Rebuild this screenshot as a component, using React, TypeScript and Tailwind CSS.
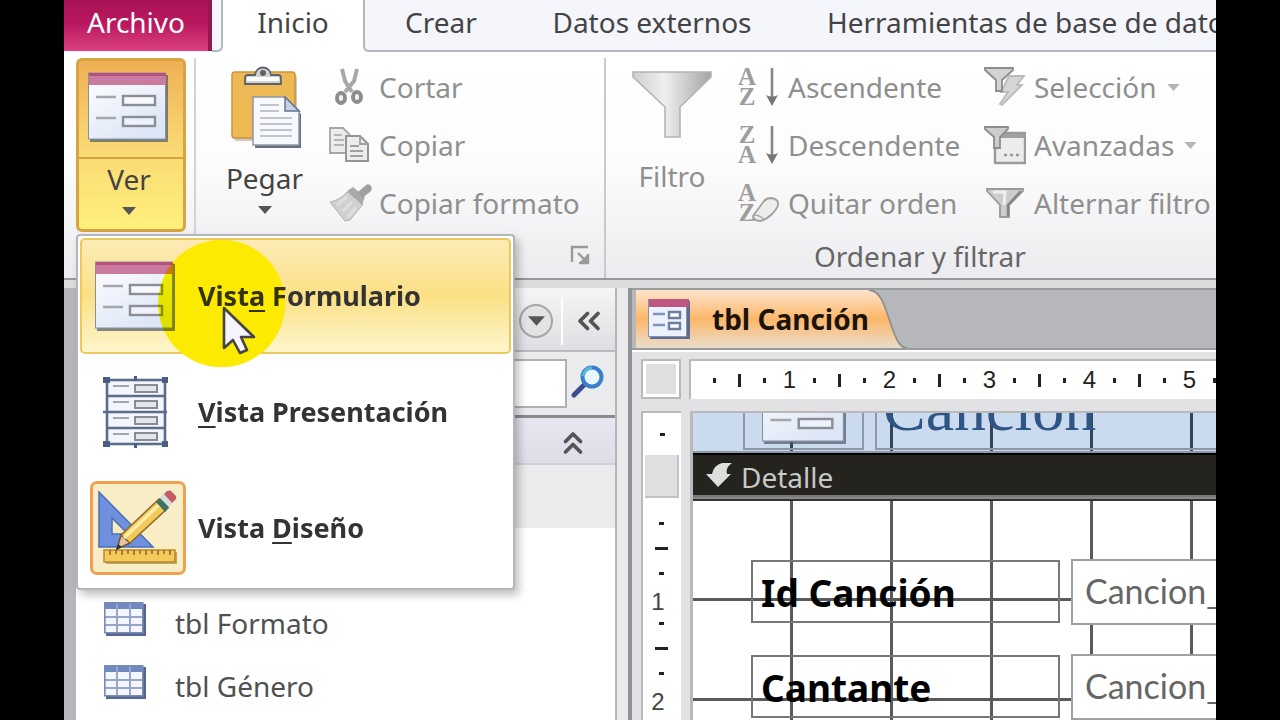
import { useState, type ReactNode } from "react";
import { ChevronsLeft, ChevronsUp } from "lucide-react";

interface IconProps {
  className?: string;
}

function FormIcon({ className }: IconProps) {
  return (
    <svg viewBox="0 0 80 70" preserveAspectRatio="none" className={className} aria-hidden="true">
      <defs>
        <linearGradient id="formBody" x1="0" y1="0" x2="0.6" y2="1">
          <stop offset="0" stopColor="#ffffff" />
          <stop offset="1" stopColor="#dde6f6" />
        </linearGradient>
      </defs>
      <rect x="2" y="3" width="78" height="67" fill="#56606f" opacity="0.75" />
      <rect x="0.5" y="1" width="77" height="66" fill="url(#formBody)" stroke="#8590a5" />
      <rect x="1" y="1" width="77" height="12" fill="#cb7a9f" />
      <rect x="1" y="1" width="77" height="3" fill="#b5517f" />
      <path d="M8 25h20M8 46h20" stroke="#a5a7ad" strokeWidth="2.4" />
      <rect x="35" y="24" width="32" height="9" fill="#f6f8fc" stroke="#8b8e98" strokeWidth="2.4" />
      <rect x="35" y="45" width="32" height="9" fill="#eef2fa" stroke="#8b8e98" strokeWidth="2.4" />
    </svg>
  );
}

function SmallFormIcon({ className }: IconProps) {
  return (
    <svg viewBox="0 0 42 40" className={className} aria-hidden="true">
      <rect x="2" y="2" width="40" height="38" fill="#5f6b8c" />
      <rect x="0.5" y="0.5" width="38" height="37" fill="#edf2fc" stroke="#8293b8" />
      <rect x="1" y="0" width="40" height="8" fill="#bd5782" />
      <path d="M5 15h12M5 26h12" stroke="#8496b5" strokeWidth="2.4" />
      <path d="M21 13h11v6H21zM21 24h11v6H21z" fill="#fff" stroke="#6b7f9f" strokeWidth="2.4" />
    </svg>
  );
}

function LayoutIcon({ className }: IconProps) {
  return (
    <svg viewBox="0 0 66 72" className={className} aria-hidden="true">
      <rect x="5" y="4" width="58" height="64" fill="#f3f6fc" stroke="#5b6d8d" strokeWidth="2.6" />
      <path d="M5 20h58M1 36h64M5 52h58" stroke="#5b6d8d" strokeWidth="2.4" />
      <path d="M11 10h16M11 26h16M11 42h16M11 58h16" stroke="#a3a6ad" strokeWidth="2.2" />
      <g fill="#e3e5ea" stroke="#878b94" strokeWidth="2">
        <rect x="33" y="9" width="22" height="7" />
        <rect x="33" y="25" width="22" height="7" />
        <rect x="33" y="41" width="22" height="7" />
        <rect x="33" y="57" width="22" height="7" />
      </g>
      <path d="M1 1h7v6H1zM60 1h6v6h-6zM1 65h7v6H1zM60 65h6v6h-6zM32 0h3v5h-3zM32 67h3v5h-3z" fill="#4a5e82" />
    </svg>
  );
}

function DesignIcon({ className }: IconProps) {
  return (
    <svg viewBox="0 0 86 84" className={className} aria-hidden="true">
      <path d="M4 6 58 61H4z" fill="#6e90dd" stroke="#4a6dbd" strokeWidth="1.5" />
      <path d="M17 32v16h16z" fill="#f9ebc0" stroke="#4a6dbd" strokeWidth="1.5" />
      <rect x="11" y="66" width="71" height="12" fill="#8a6a24" opacity="0.55" />
      <rect x="9" y="64" width="71" height="12" fill="#f5c95a" stroke="#b98a2c" strokeWidth="1.5" />
      <path d="M15 64v5M21 64v4M27 64v5M33 64v4M39 64v5M45 64v4M51 64v5M57 64v4M63 64v5M69 64v4M75 64v5" stroke="#8a6524" strokeWidth="1.5" />
      <path d="m22 63 4-14 9 8z" fill="#e9c3a4" stroke="#6b5536" strokeWidth="1.5" />
      <path d="M26 49 64 13l9 9-38 35z" fill="#f3ca57" stroke="#896a2d" strokeWidth="1.5" />
      <path d="m29 52 38-36" stroke="#fdecaa" strokeWidth="3.5" />
      <path d="m21 64 2-6 4 3z" fill="#333" />
      <path d="m61 16 4-4 9 9-4 5z" fill="#3f7160" />
      <path d="m65 11 4-3 9 8-4 5z" fill="#d9dce3" />
      <path d="m69 8 3-3q2-1 4 0l4 4q2 2 1 4l-4 4z" fill="#c75b62" />
    </svg>
  );
}

function PasteIcon({ className }: IconProps) {
  return (
    <svg viewBox="0 0 72 82" className={className} aria-hidden="true">
      <rect x="3" y="9" width="63" height="66" rx="3" fill="#aaa08c" opacity="0.55" />
      <rect x="1" y="6" width="63" height="66" rx="3" fill="#edb955" stroke="#c9933a" strokeWidth="1.5" />
      <path d="M14 18v-6q0-3 3-3h7c1-10 15-10 16 0h7q3 0 3 3v6z" fill="#cfd1d5" stroke="#5f6268" strokeWidth="1.8" />
      <path d="M16 13h32" stroke="#fff" strokeWidth="4" />
      <circle cx="32" cy="7" r="3" fill="#5f6268" />
      <path d="M24 34h31l15 14v34H24z" fill="#68707d" />
      <path d="M22 31h32l14 14v34H22z" fill="#f7f9fd" stroke="#8e97a6" strokeWidth="1.5" />
      <path d="M54 31v14h14z" fill="#c3d2e8" stroke="#68748a" strokeWidth="1.5" />
      <path d="M29 39h19M29 45h19M29 52h32M29 58h32M29 64h32M29 70h32" stroke="#bfc4ce" strokeWidth="2" />
    </svg>
  );
}

function CutIcon() {
  return (
    <svg viewBox="0 0 40 38" className="h-[38px] w-10" aria-hidden="true">
      <path d="m13 1 3 12 7 11M28 1l-3 12-9 11" fill="none" stroke="#a8a8a8" strokeWidth="4" />
      <ellipse cx="12" cy="30" rx="4" ry="5" fill="#f4f4f4" stroke="#8d8d8d" strokeWidth="4" />
      <ellipse cx="28" cy="29" rx="4" ry="5" fill="#f4f4f4" stroke="#8d8d8d" strokeWidth="4" />
    </svg>
  );
}

function CopyIcon() {
  return (
    <svg viewBox="0 0 40 38" className="h-[38px] w-10" aria-hidden="true">
      <path d="M1 2h13l7 7v18H1z" fill="#ececec" stroke="#a6a6a6" strokeWidth="1.8" />
      <path d="M5 9h8M5 14h10M5 19h10" stroke="#b5b5b5" strokeWidth="1.8" />
      <path d="M17 10h14l8 8v17H17z" fill="#ededed" stroke="#949494" strokeWidth="2" />
      <path d="M31 10v8h8M21 20h9M21 25h13M21 30h13" fill="none" stroke="#a0a0a0" strokeWidth="1.8" />
    </svg>
  );
}

function BrushIcon() {
  return (
    <svg viewBox="0 0 44 40" className="h-10 w-11" aria-hidden="true">
      <path d="M1 19q10-2 17-10l16 12-13 16-5 1z" fill="#d0d0d0" stroke="#b0b0b0" />
      <path d="m18 8 6-4 12 10-3 8z" fill="#aaa" />
      <path d="m29 9 8-7q3-2 5 1 2 3-1 6l-8 6z" fill="#a0a0a0" />
      <path d="m8 22 10-8M14 28l9-9M19 34l8-10" stroke="#dedede" strokeWidth="3" />
    </svg>
  );
}

function FunnelIcon({ className }: IconProps) {
  return (
    <svg viewBox="0 0 80 70" className={className} aria-hidden="true">
      <defs>
        <linearGradient id="funnel">
          <stop offset="0" stopColor="#cfcfcf" />
          <stop offset="0.4" stopColor="#efefef" />
          <stop offset="1" stopColor="#a5a5a5" />
        </linearGradient>
      </defs>
      <path d="M1 2h78v5L48 37v30H33V37L1 7z" fill="url(#funnel)" stroke="#b3b3b3" strokeWidth="1.6" />
    </svg>
  );
}

function SmallFunnel() {
  return (
    <svg viewBox="0 0 42 34" className="h-[34px] w-[42px]" aria-hidden="true">
      <path d="M3 3h36v2L25 19v12h-9V19L3 5z" fill="#cdcdcd" stroke="#999" strokeWidth="1.8" />
      <path d="M9 6h12l-1 13" fill="none" stroke="#efefef" strokeWidth="3" />
      <path d="M37 5 24 19v11" fill="none" stroke="#858585" strokeWidth="2.5" />
    </svg>
  );
}

function SelectionIcon() {
  return (
    <svg viewBox="0 0 42 42" className="h-[42px] w-[42px]" aria-hidden="true">
      <path d="M25 10h15l-7 9h5L18 39l-2-1 8-12h-7z" fill="#d6d6d6" stroke="#bbb" strokeWidth="1.8" />
      <path d="M1 2h28v2L18 14v11h-6V14L1 4z" fill="#d3d3d3" stroke="#8d8d8d" strokeWidth="1.8" />
    </svg>
  );
}

function AdvancedIcon() {
  return (
    <svg viewBox="0 0 42 42" className="h-[42px] w-[42px]" aria-hidden="true">
      <path d="M11 9h30v30H11z" fill="#ececec" stroke="#9a9a9a" strokeWidth="2.4" />
      <path d="M12 12h28" stroke="#a0a0a0" strokeWidth="4" />
      <path d="M20 31h3M26 31h3M32 31h3" stroke="#999" strokeWidth="2.5" />
      <path d="M1 3h23v2L16 13v11h-6V13L1 5z" fill="#cdcdcd" stroke="#8d8d8d" strokeWidth="1.8" />
    </svg>
  );
}

function SortLetters({ top, bottom }: { top: string; bottom: string }) {
  return (
    <span className="flex w-[18px] flex-col items-center font-['Liberation_Serif',serif] text-[25px] leading-[20px] font-bold text-[#9d9d9d]">
      <span>{top}</span>
      <span>{bottom}</span>
    </span>
  );
}

function SortIcon({ top, bottom }: { top: string; bottom: string }) {
  return (
    <span className="flex items-center gap-2" aria-hidden="true">
      <SortLetters top={top} bottom={bottom} />
      <svg viewBox="0 0 16 40" className="h-10 w-4">
        <path d="M8 1v30" stroke="#888" strokeWidth="2.6" />
        <path d="M2 28q6 3 12 0L8 39z" fill="#777" />
      </svg>
    </span>
  );
}

function ClearSortIcon() {
  return (
    <span className="relative flex w-10 items-center" aria-hidden="true">
      <SortLetters top="A" bottom="Z" />
      <svg viewBox="0 0 30 28" className="absolute bottom-0 left-3 h-7 w-[30px]">
        <path d="M3 21 14 6q3-3 7-3 8 1 7 7-1 4-6 9-6 6-12 7-6 0-7-5z" fill="#ededed" stroke="#a0a0a0" strokeWidth="1.8" />
        <path d="M3 20q8 0 11 5" fill="none" stroke="#aaa" strokeWidth="1.5" />
      </svg>
    </span>
  );
}

function Caret({ className }: IconProps) {
  return (
    <svg viewBox="0 0 14 8" className={className} aria-hidden="true">
      <path d="M0 0h14L7 8z" fill="currentColor" />
    </svg>
  );
}

function TableIcon() {
  return (
    <svg viewBox="0 0 42 34" className="mb-2 h-[34px] w-[42px]" aria-hidden="true">
      <path d="M2 2h40v32H2z" fill="#566690" />
      <path d="M0 0h39v31H0z" fill="#f3f6fc" />
      <path d="M0 0h39v7H0z" fill="#7189c2" />
      <path d="M0 15h39M0 23h39M13 0v31M26 0v31" stroke="#98a6c8" strokeWidth="2" />
      <path d="M.8.8h38v30H.8z" fill="none" stroke="#788ab5" strokeWidth="1.6" />
    </svg>
  );
}

function SearchIcon() {
  return (
    <svg viewBox="0 0 34 34" className="mb-1.5 h-[34px] w-[34px]" aria-hidden="true">
      <path d="M3 31 14 20" stroke="#3b4c8f" strokeWidth="5" strokeLinecap="round" />
      <circle cx="21" cy="13" r="9.5" fill="#eaf7fe" stroke="#3a7fc8" strokeWidth="4" />
      <path d="M12 12q2-8 9-8" fill="none" stroke="#5ab6de" strokeWidth="3" />
    </svg>
  );
}

interface RibbonCommandProps {
  icon: ReactNode;
  label: string;
  menu?: boolean;
}

function RibbonCommand({ icon, label, menu }: RibbonCommandProps) {
  return (
    <button type="button" className="flex h-[58px] items-center whitespace-nowrap text-[#8f8f8f]">
      <span className="flex w-[50px] shrink-0 items-center">{icon}</span>
      {label}
      {menu && <Caret className="ml-2.5 h-[7px] w-[13px] text-[#b5b5b5]" />}
    </button>
  );
}

const viewOptions = [
  { id: "form", before: "Vist", key: "a", after: " Formulario" },
  { id: "layout", before: "", key: "V", after: "ista Presentación" },
  { id: "design", before: "Vista ", key: "D", after: "iseño" },
];

function ViewMenu({ current, onSelect }: { current: string; onSelect: (id: string) => void }) {
  return (
    <div
      role="menu"
      className="absolute top-[176px] left-0 z-20 w-[439px] rounded-[4px] border-2 border-[#b3b5ba] bg-white p-[2px] shadow-[4px_5px_8px_rgba(0,0,0,0.25)]"
    >
      {viewOptions.map((option) => (
        <button
          key={option.id}
          type="button"
          role="menuitem"
          onClick={() => onSelect(option.id)}
          className={
            option.id === "form"
              ? "relative flex h-[116px] w-full items-center gap-3 rounded-[5px] border-2 border-[#ecc95e] bg-linear-to-b from-[#fcebb5] via-[#fbe084] to-[#fdf6cc] pl-2"
              : "flex h-[116px] w-full items-center gap-3 rounded-[5px] border-2 border-transparent pl-2"
          }
        >
          {option.id === "form" && (
            <span className="absolute top-0 left-[76px] size-[127px] rounded-full bg-[#fcf000]" />
          )}
          <span
            className={
              option.id === current
                ? "flex h-[94px] w-24 items-center justify-center rounded-[7px] border-[3px] border-[#f0a04f] bg-[#f9edc5]"
                : "z-10 flex h-[94px] w-24 items-center justify-center pr-1.5"
            }
          >
            {option.id === "form" && <FormIcon className="h-[70px] w-20" />}
            {option.id === "layout" && <LayoutIcon className="h-[72px] w-[66px]" />}
            {option.id === "design" && <DesignIcon className="h-[84px] w-[86px]" />}
          </span>
          <span className="z-10 text-[27px] font-bold whitespace-pre text-[#333]">
            {option.before}
            <span className="underline decoration-2 underline-offset-4">{option.key}</span>
            {option.after}
          </span>
        </button>
      ))}
      {/* pointer highlight, tints the icon without hiding it */}
      <div className="pointer-events-none absolute top-[4px] left-[80px] z-20 size-[127px] rounded-full bg-[#fff900] mix-blend-multiply" />
      <svg viewBox="0 0 34 50" className="pointer-events-none absolute top-[69px] left-[144px] z-20 h-[50px] w-[34px]" aria-hidden="true">
        <path d="M2 3v40l9-8 7 13 7-3-6-13h13z" fill="#f5f4fa" stroke="#444" strokeWidth="2.6" strokeLinejoin="round" />
      </svg>
    </div>
  );
}

function RibbonTabs() {
  return (
    <div role="tablist" className="flex h-[52px] shrink-0 overflow-hidden bg-[#f5f6fb] text-[28px] whitespace-nowrap text-[#444]">
      <button type="button" role="tab" className="mb-[1px] w-[148px] shrink-0 border-r-4 border-[#8e174f] bg-linear-to-b from-[#a91354] via-[#bb1860] to-[#dc4083] pb-2 text-white">
        Archivo
      </button>
      <span className="w-[11px] shrink-0 rounded-br-[6px] border-r-2 border-b-2 border-[#b4b6ba]" />
      <button type="button" role="tab" aria-selected="true" className="w-[140px] shrink-0 bg-white pb-2">
        Inicio
      </button>
      <span className="flex min-w-0 flex-1 rounded-bl-[6px] border-b-2 border-l-2 border-[#b4b6ba] pb-1.5">
        <button type="button" role="tab" className="w-[152px] shrink-0">
          Crear
        </button>
        <button type="button" role="tab" className="w-[270px] shrink-0">
          Datos externos
        </button>
        <button type="button" role="tab" className="shrink-0 pl-10">
          Herramientas de base de datos
        </button>
      </span>
    </div>
  );
}

function Ribbon() {
  const [menuOpen, setMenuOpen] = useState(true);
  const [view, setView] = useState("design");

  return (
    <div className="flex h-[228px] shrink-0 border-b-2 border-[#96989b] bg-linear-to-b from-white via-[#fcfcfc] to-[#ececf0] pt-1.5 text-[28px]">
      <section className="relative w-[132px] shrink-0 border-r-2 border-[#d2d3d6] pl-3">
        <div className="relative">
          <button
            type="button"
            onClick={() => setMenuOpen(!menuOpen)}
            className="flex h-[174px] w-[110px] flex-col items-center rounded-[6px] border-[3px] border-[#d8a341] bg-linear-to-b from-[#efb054] via-[#f9d873] to-[#fff07c] text-[#444]"
          >
            <span className="flex h-[98px] w-full items-center justify-center border-b-2 border-[#d8a341] pr-1.5 pb-1">
              <FormIcon className="h-[70px] w-20" />
            </span>
            <span className="pr-1 leading-[40px]">Ver</span>
            <Caret className="mt-2 mr-1 h-2 w-[14px] text-[#555]" />
          </button>
          {menuOpen && <ViewMenu current={view} onSelect={setView} />}
        </div>
      </section>

      <section className="flex w-[410px] shrink-0 flex-col border-r-2 border-[#c9cacd]">
        <div className="flex">
          <button type="button" className="flex h-[174px] w-[133px] flex-col items-center pt-2 pl-1 text-[#444]">
            <PasteIcon className="ml-1 h-[82px] w-[72px]" />
            <span className="mt-2 leading-[44px]">Pegar</span>
            <Caret className="mt-1.5 h-2 w-[14px] text-[#555]" />
          </button>
          <div className="flex flex-col">
            <RibbonCommand icon={<CutIcon />} label="Cortar" />
            <RibbonCommand icon={<CopyIcon />} label="Copiar" />
            <RibbonCommand icon={<BrushIcon />} label="Copiar formato" />
          </div>
        </div>
        <div className="flex h-[46px] items-center justify-end pr-3.5">
          <button type="button" aria-label="Portapapeles">
            <svg viewBox="0 0 20 20" className="size-5" aria-hidden="true">
              <path d="M2 17V2h16M8 8l7 7M9 18h9V9" fill="none" stroke="#999" strokeWidth="2.4" />
              <path d="M18 9v9H9z" fill="#999" />
            </svg>
          </button>
        </div>
      </section>

      <section className="flex min-w-0 flex-1 flex-col overflow-hidden">
        <div className="flex">
          <button type="button" className="flex h-[174px] w-[132px] shrink-0 flex-col items-center pt-3 text-[#8f8f8f]">
            <FunnelIcon className="h-[70px] w-20" />
            <span className="mt-3.5 leading-[44px]">Filtro</span>
          </button>
          <div className="flex w-[246px] shrink-0 flex-col">
            <RibbonCommand icon={<SortIcon top="A" bottom="Z" />} label="Ascendente" />
            <RibbonCommand icon={<SortIcon top="Z" bottom="A" />} label="Descendente" />
            <RibbonCommand icon={<ClearSortIcon />} label="Quitar orden" />
          </div>
          <div className="flex shrink-0 flex-col">
            <RibbonCommand icon={<SelectionIcon />} label="Selección" menu />
            <RibbonCommand icon={<AdvancedIcon />} label="Avanzadas" menu />
            <RibbonCommand icon={<SmallFunnel />} label="Alternar filtro" />
          </div>
        </div>
        <h2 className="pl-[208px] leading-[48px] whitespace-nowrap text-[#666]">Ordenar y filtrar</h2>
      </section>
    </div>
  );
}

function NavigationPane() {
  return (
    <nav className="flex w-[541px] shrink-0 flex-col border-r-2 border-[#b4b6ba] bg-white">
      <div className="flex h-16 shrink-0 items-center justify-end border-b-2 border-[#b9babd] bg-linear-to-b from-[#f5f5f7] to-[#dedfe2] pt-1">
        <button type="button" aria-label="Filtrar lista" className="flex size-[34px] items-center justify-center rounded-full border-2 border-[#a5a5a8] bg-[#e3e3e5] text-[#555]">
          <Caret className="h-[10px] w-[17px]" />
        </button>
        <span className="mx-2 h-12 w-[2px] bg-white" />
        <button type="button" aria-label="Contraer panel" className="mr-2 text-[#555]">
          <ChevronsLeft size={36} strokeWidth={2.5} />
        </button>
      </div>
      <div className="flex h-[66px] shrink-0 items-center gap-1 border-b-[3px] border-[#8a8b8e] bg-[#eaebed] pr-2.5 pl-3">
        <input type="text" aria-label="Buscar" className="h-[49px] min-w-0 flex-1 border-2 border-[#b0b1b4] bg-white" />
        <button type="button" aria-label="Buscar ahora">
          <SearchIcon />
        </button>
      </div>
      <div className="flex h-[47px] shrink-0 items-center justify-end border-b-2 border-[#cfd0d6] bg-linear-to-b from-[#e6e7f0] to-[#dcdde6] pt-1 pr-6">
        <button type="button" aria-label="Contraer tablas" className="text-[#555]">
          <ChevronsUp size={36} strokeWidth={2.5} />
        </button>
      </div>
      <ul className="flex flex-col text-[28px] text-[#505050]">
        <li className="h-[63px] bg-[#eaebed]" />
        <li className="h-[63px]" />
        {["tbl Formato", "tbl Género"].map((name) => (
          <li key={name}>
            <a href="#" className="flex h-[63px] items-center gap-[29px] pl-7">
              <TableIcon />
              {name}
            </a>
          </li>
        ))}
      </ul>
    </nav>
  );
}

function HorizontalRuler() {
  return (
    <div className="flex h-10 min-w-0 flex-1 items-center overflow-hidden border-t-2 border-l-2 border-[#b9b9bc] bg-white pl-[11px] font-['Liberation_Sans',sans-serif] text-[24px] text-[#222]">
      {[1, 2, 3, 4, 5, 6].map((n) => (
        <div key={n} className="flex shrink-0 items-center">
          <span className="flex w-[25px] justify-center">
            <span className="h-[5px] w-[3px] bg-[#222]" />
          </span>
          <span className="flex w-[25px] justify-center">
            <span className="h-[13px] w-[3px] bg-[#222]" />
          </span>
          <span className="flex w-[25px] justify-center">
            <span className="h-[5px] w-[3px] bg-[#222]" />
          </span>
          {n < 6 && <span className="w-[25px] text-center">{n}</span>}
        </div>
      ))}
    </div>
  );
}

function VerticalRuler() {
  return (
    <div className="flex w-10 shrink-0 flex-col items-center border-t-2 border-l-2 border-[#b9b9bc] bg-white font-['Liberation_Sans',sans-serif] text-[24px] text-[#444]">
      <span className="flex h-[42px] shrink-0 items-center">
        <span className="h-[3px] w-[5px] bg-[#222]" />
      </span>
      <span className="h-[43px] w-[34px] shrink-0 border-r-2 border-b-2 border-[#c2c2c4] bg-[#dfdfe1]" />
      <span className="h-[13px] shrink-0" />
      {[1, 2].map((n) => (
        <div key={n} className="flex shrink-0 flex-col items-center">
          <span className="flex h-[25px] items-center">
            <span className="h-[3px] w-[5px] bg-[#222]" />
          </span>
          <span className="flex h-[25px] items-center">
            <span className="h-[3px] w-[13px] bg-[#222]" />
          </span>
          <span className="flex h-[25px] items-center">
            <span className="h-[3px] w-[5px] bg-[#222]" />
          </span>
          <span className="h-[25px] pr-2 leading-[32px]">{n}</span>
        </div>
      ))}
    </div>
  );
}

function DesignCanvas() {
  return (
    <div className="flex min-w-0 flex-1 flex-col overflow-hidden border-l-[3px] border-[#b9b9bc] bg-white">
      <div className="relative h-[42px] shrink-0 overflow-hidden border-t-2 border-b-2 border-t-[#b9b9bc] border-b-[#8d97a5] bg-[#cadaef] bg-[linear-gradient(90deg,transparent_97px,#34445a_97px)] bg-size-[100px_100%]">
        <div className="absolute -top-20 left-[50px] flex h-[117px] w-[121px] items-end justify-center border-2 border-[#8d97a5] pb-1">
          <FormIcon className="h-[70px] w-[84px]" />
        </div>
        <div className="absolute -top-20 left-[182px] h-[117px] w-[600px] border-2 border-[#8d97a5]" />
        <h1 className="absolute -top-[36px] left-[190px] font-['Liberation_Serif',serif] text-[64px] leading-[64px] text-[#2f5585]">
          Canción
        </h1>
      </div>
      <div className="flex h-[42px] shrink-0 items-center gap-2 border-t-2 border-black bg-[#24231d] pt-1 pl-3 text-[28px] leading-[38px] text-[#c8c8c8]">
        <svg viewBox="0 0 28 26" className="mb-1 h-[26px] w-7" aria-hidden="true">
          <path d="M1 12h6Q9 3 17 1h10q-7 5-5 11h4L13 25z" fill="#dedede" />
        </svg>
        Detalle
      </div>
      <div className="h-[6px] shrink-0 border-t-2 border-b-2 border-t-[#777] border-b-[#333] bg-[#888]" />
      <div className="relative flex-1 overflow-hidden bg-[linear-gradient(90deg,transparent_97px,#5a5a5a_97px),linear-gradient(transparent_97px,#5a5a5a_97px)] bg-size-[100px_100px]">
        <label
          htmlFor="id-cancion"
          className="absolute top-[59px] left-[58px] h-[63px] w-[309px] border-2 border-[#777] pl-2 font-['Comic_Sans_MS','Noto_Sans',sans-serif] text-[37px] leading-[62px] font-bold text-black"
        >
          Id Canción
        </label>
        <input
          id="id-cancion"
          readOnly
          value="Cancion_"
          className="absolute top-[58px] left-[378px] h-[66px] w-[600px] border-2 border-[#a0a0a0] bg-white pb-1 pl-3 font-[Lato,sans-serif] text-[34px] text-[#666]"
        />
        <label
          htmlFor="cantante"
          className="absolute top-[154px] left-[58px] h-[63px] w-[309px] border-2 border-[#777] pl-2 font-['Comic_Sans_MS','Noto_Sans',sans-serif] text-[37px] leading-[62px] font-bold text-black"
        >
          Cantante
        </label>
        <input
          id="cantante"
          readOnly
          value="Cancion_"
          className="absolute top-[153px] left-[378px] h-[66px] w-[600px] border-2 border-[#a0a0a0] bg-white pb-1 pl-3 font-[Lato,sans-serif] text-[34px] text-[#666]"
        />
      </div>
    </div>
  );
}

function DocumentArea() {
  return (
    <main className="flex min-w-0 flex-1 flex-col bg-[#e2e2e4]">
      <div className="flex h-[62px] shrink-0 border-t-2 border-b-2 border-[#9a9b9e] bg-[#b5b7bb] pl-1">
        <button type="button" className="flex shrink-0 items-center gap-[22px] bg-linear-to-b from-[#fbe3cb] via-[#fcb767] to-[#e9dccb] pl-3 text-[28px] font-bold text-[#1c140c]">
          <SmallFormIcon className="h-10 w-[42px]" />
          tbl Canción
        </button>
        <svg viewBox="0 0 50 58" preserveAspectRatio="none" className="h-full w-10" aria-hidden="true">
          <defs>
            <linearGradient id="tabEnd" x1="0" y1="0" x2="0" y2="1">
              <stop offset="0" stopColor="#fbe3cb" />
              <stop offset="0.5" stopColor="#fcb767" />
              <stop offset="1" stopColor="#e9dccb" />
            </linearGradient>
          </defs>
          <path d="M-1 0C16 0 20 18 28 36c6 13 10 22 20 22H-1z" fill="url(#tabEnd)" />
          <path d="M-1 0C16 0 20 18 28 36c6 13 10 22 20 22" fill="none" stroke="#8e8e8e" strokeWidth="2" />
        </svg>
      </div>
      <div className="flex min-h-0 flex-1 flex-col gap-3 border-t-2 border-white pt-[7px] pl-[9px]">
        <div className="flex gap-2">
          <button type="button" aria-label="Seleccionar formulario" className="size-10 shrink-0 border-2 border-[#b9b9bc] bg-[#dfdfe1] outline-3 -outline-offset-5 outline-white" />
          <HorizontalRuler />
        </div>
        <div className="flex min-h-0 flex-1 gap-[9px]">
          <VerticalRuler />
          <DesignCanvas />
        </div>
      </div>
    </main>
  );
}

export default function App() {
  return (
    <div className="h-screen overflow-hidden bg-black px-16 font-['Noto_Sans',sans-serif]">
      <div className="flex h-full flex-col overflow-hidden bg-[#dcdcde]">
        <RibbonTabs />
        <Ribbon />
        <div className="mt-2 flex min-h-0 flex-1 bg-[#b5b7bb] pl-3">
          <NavigationPane />
          <div className="w-[15px] shrink-0 border-r-4 border-[#919296] bg-[#ebebed]" />
          <DocumentArea />
        </div>
      </div>
    </div>
  );
}
